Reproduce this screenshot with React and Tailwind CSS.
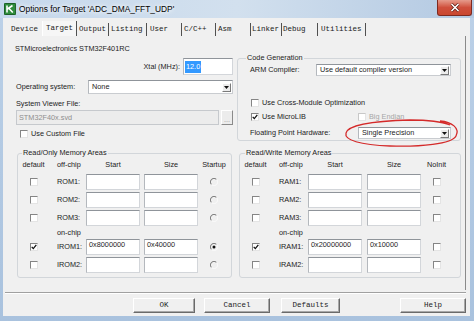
import React from "react";

const tabs = [
  { label: "Device", cls: "w-[34px] pl-[3px]" },
  { label: "Target", cls: "w-[35px] pl-[3px] h-[15px] leading-[15px] bg-[#f6f6f6] border-l border-l-white border-r border-r-[#505050]", active: true },
  { label: "Output", cls: "w-[32px] pl-[2px] border-r border-r-[#505050]" },
  { label: "Listing", cls: "w-[38px] pl-[2px] border-r border-r-[#505050]" },
  { label: "User", cls: "w-[35px] pl-[3px] border-r border-r-[#505050]" },
  { label: "C/C++", cls: "w-[34px] pl-[2px] border-r border-r-[#505050]" },
  { label: "Asm", cls: "w-[35px] pl-[2px] border-r border-r-[#505050]" },
  { label: "Linker", cls: "w-[31px] pl-[1px] border-r border-r-[#505050]" },
  { label: "Debug", cls: "w-[36px] pl-[1px] border-r border-r-[#505050]" },
  { label: "Utilities", cls: "w-[48px] pl-[3px] border-r border-r-[#505050]" },
];

function Check({ checked, disabled }) {
  return (
    <span
      className={`flex h-[8px] w-[8px] shrink-0 items-center justify-center border bg-white border-r-[#e4e4e4] border-b-[#e4e4e4] ${
        disabled ? "border-t-[#c8c8c8] border-l-[#c8c8c8]" : "border-t-[#858585] border-l-[#858585]"
      }`}
    >
      {checked && (
        <svg width="6" height="6" viewBox="0 0 6 6">
          <path d="M0.7 2.9 L2.3 4.6 L5.3 0.9" stroke="#111" strokeWidth="1.3" fill="none" />
        </svg>
      )}
    </span>
  );
}

function Radio({ on }) {
  return (
    <svg width="8" height="8" viewBox="0 0 8 8">
      <path d="M6.6 1.4 A3.6 3.6 0 0 0 1.4 6.6" stroke="#6e6e6e" strokeWidth="1" fill="none" />
      <path d="M1.4 6.6 A3.6 3.6 0 0 0 6.6 1.4" stroke="#fafafa" strokeWidth="1" fill="none" />
      {on && <circle cx="4" cy="4" r="1.5" fill="#111" />}
    </svg>
  );
}

function Field({ className = "", children }) {
  return (
    <div
      className={`shrink-0 border bg-white border-t-[#8f949a] border-l-[#b4b8bd] border-r-[#d3d6da] border-b-[#d3d6da] pl-[2px] text-[7.3px] leading-[10px] ${className}`}
    >
      {children}
    </div>
  );
}

function Select({ className = "", text }) {
  return (
    <div
      className={`flex shrink-0 items-center border bg-white border-t-[#8f949a] border-l-[#b4b8bd] border-r-[#c9ccd0] border-b-[#c9ccd0] pl-[3px] text-[7.3px] leading-[10px] ${className}`}
    >
      <span>{text}</span>
      <span className="ml-auto mr-[1px] flex h-[9px] w-[9px] items-center justify-center border border-t-white border-l-white border-r-[#7a7a7a] border-b-[#7a7a7a] bg-[#ececec]">
        <svg width="5" height="3" viewBox="0 0 5 3">
          <path d="M0 0 H5 L2.5 3 Z" fill="#111" />
        </svg>
      </span>
    </div>
  );
}

function Group({ label, labelCls, className, children }) {
  return (
    <div className={`relative shrink-0 rounded-[3px] border border-[#d2d6da] ${className}`}>
      <span className={`absolute top-[-6px] bg-[#f0f0f0] px-[1px] text-[7.3px] leading-[10px] ${labelCls}`}>
        {label}
      </span>
      {children}
    </div>
  );
}

function MemRow({ label, start = "", size = "", checked, tail, gapCls, endCls, rowCls }) {
  return (
    <div className={`flex h-[16px] items-center ${rowCls}`}>
      <div className="flex w-[31px] shrink-0 justify-center">
        <Check checked={checked} />
      </div>
      <div className="w-[37px] shrink-0 pl-[8px] text-[7.3px] leading-[10px]">{label}</div>
      <Field className="h-[16px] w-[54px]">{start}</Field>
      <Field className={`h-[16px] w-[54px] ${gapCls}`}>{size}</Field>
      <div className={`flex shrink-0 justify-center ${endCls}`}>{tail}</div>
    </div>
  );
}

function MemHeader({ last, gapCls, endCls }) {
  return (
    <div className="mt-[6px] flex h-[10px] items-center text-[7.3px] leading-[10px]">
      <div className="w-[31px] shrink-0 text-center">default</div>
      <div className="w-[37px] shrink-0 pl-[8px]">off-chip</div>
      <div className="w-[54px] shrink-0 text-center">Start</div>
      <div className={`w-[54px] shrink-0 text-center ${gapCls}`}>Size</div>
      <div className={`shrink-0 text-center ${endCls}`}>{last}</div>
    </div>
  );
}

function Button({ className, children }) {
  return (
    <div
      className={`flex h-[15px] shrink-0 items-center justify-center border border-t-white border-l-white border-r-[#6a6a6a] border-b-[#6a6a6a] bg-[#f0f0f0] font-['Liberation_Mono',monospace] text-[7.5px] shadow-[inset_-1px_-1px_0_#a8a8a8] ${className}`}
    >
      {children}
    </div>
  );
}

export default function App() {
  return (
    <div className="relative h-[321px] w-[474px] overflow-hidden bg-linear-to-b from-[#bcd1e8] to-[#a9c2de] font-['Liberation_Sans',Arial,sans-serif] text-[#1c1c1c]">
      {/* Title bar */}
      <div className="flex h-[18px] items-start bg-linear-to-r from-[#c6d8ec] via-[#d2e0ee] to-[#b3c9e2]">
        <svg className="ml-[4px] mt-[3px] shrink-0" width="12" height="12" viewBox="0 0 12 12">
          <rect x="0" y="0" width="12" height="12" rx="1" fill="#2f8d3c" />
          <rect x="0.5" y="0.5" width="11" height="11" rx="1" fill="none" stroke="#1d5e27" />
          <path d="M3 2.5 V9.5 M3.5 6 L8.5 2.5 M4.8 5.2 L8.8 9.5" stroke="#fff" strokeWidth="1.6" fill="none" />
        </svg>
        <span className="ml-[3px] mt-[4px] text-[8.4px] leading-[10px] text-black [text-shadow:0_0_4px_#ffffff,0_0_6px_#ffffff]">
          Options for Target 'ADC_DMA_FFT_UDP'
        </span>
        <div className="ml-auto mr-[2px] flex h-[16px] w-[35px] items-center justify-center rounded-b-[3px] border border-t-0 border-[#7e2a20] bg-linear-to-b from-[#e59a8c] via-[#cf4f3c] to-[#c9472f]">
          <svg width="10" height="9" viewBox="0 0 10 9">
            <path d="M1.5 1 L8.5 8 M8.5 1 L1.5 8" stroke="#5a1b14" strokeWidth="3" />
            <path d="M1.5 1 L8.5 8 M8.5 1 L1.5 8" stroke="#ffffff" strokeWidth="1.6" />
          </svg>
        </div>
      </div>

      {/* Client area */}
      <div className="ml-[3px] h-[298px] w-[467px] bg-[#f0f0f0]">
        {/* Tabs */}
        <div className="flex h-[18px] items-end pl-[5px] font-['Liberation_Mono',monospace] text-[7.5px] text-[#202020]">
          {tabs.map((t) => (
            <div key={t.label} className={`h-[13px] shrink-0 leading-[13px] ${t.cls}`}>
              {t.label}
            </div>
          ))}
        </div>

        {/* Tab panel */}
        <div className="ml-[2px] flex h-[254px] w-[461px] flex-col border-r border-r-[#8a8a8a]">
          {/* Top section */}
          <div className="flex h-[114px] shrink-0">
            <div className="ml-[10px] flex w-[219px] shrink-0 flex-col text-[7.3px] leading-[10px]">
              <div className="mt-[8px] h-[10px]">STMicroelectronics STM32F401RC</div>
              <div className="mt-[4px] flex h-[17px] items-center justify-end pr-[1px]">
                <span>Xtal (MHz):</span>
                <div className="ml-[3px] flex h-[17px] w-[50px] items-center border bg-white border-t-[#8f949a] border-l-[#b4b8bd] border-r-[#d3d6da] border-b-[#d3d6da] pl-[1px]">
                  <span className="bg-[#3399ff] px-[1px] leading-[12px] text-white">12.0</span>
                </div>
              </div>
              <div className="mt-[5px] flex h-[14px] items-center">
                <span className="w-[73px] shrink-0 pl-[1px]">Operating system:</span>
                <Select className="h-[14px] w-[145px]" text="None" />
              </div>
              <div className="mt-[5px] h-[10px] pl-[1px]">System Viewer File:</div>
              <div className="mt-[1px] flex h-[15px] items-center">
                <div className="ml-[1px] h-[15px] w-[203px] border border-[#c6c9cd] bg-[#ececec] pl-[2px] leading-[13px] text-[#8e8e8e]">
                  STM32F40x.svd
                </div>
                <div className="ml-[2px] flex h-[15px] w-[12px] items-end justify-center border border-t-white border-l-white border-r-[#8a8a8a] border-b-[#8a8a8a] bg-[#ececec] leading-[8px] text-[#9a9a9a]">
                  ...
                </div>
              </div>
              <div className="mt-[4px] flex h-[10px] items-center">
                <span className="ml-[5px]">
                  <Check />
                </span>
                <span className="ml-[3px]">Use Custom File</span>
              </div>
            </div>

            <Group
              label="Code Generation"
              labelCls="left-[8px]"
              className="ml-[3px] mt-[22px] h-[83px] w-[224px] text-[7.3px] leading-[10px]"
            >
              <div className="mt-[5px] flex h-[12px] items-center">
                <span className="w-[78px] shrink-0 pl-[12px]">ARM Compiler:</span>
                <Select className="h-[12px] w-[135px]" text="Use default compiler version" />
              </div>
              <div className="mt-[22px] flex h-[10px] items-center pl-[13px]">
                <Check />
                <span className="ml-[3px]">Use Cross-Module Optimization</span>
              </div>
              <div className="mt-[4px] flex h-[10px] items-center pl-[13px]">
                <span className="flex w-[107px] shrink-0 items-center">
                  <Check checked />
                  <span className="ml-[3px]">Use MicroLIB</span>
                </span>
                <Check disabled />
                <span className="ml-[3px] text-[#a6a6a6]">Big Endian</span>
              </div>
              <div className="mt-[5px] flex h-[12px] items-center">
                <span className="w-[120px] shrink-0 pl-[12px]">Floating Point Hardware:</span>
                <Select className="h-[12px] w-[93px]" text="Single Precision" />
              </div>
            </Group>
          </div>

          {/* Memory areas */}
          <div className="mt-[3px] flex">
            <Group label="Read/Only Memory Areas" labelCls="left-[4px]" className="ml-[12px] h-[125px] w-[215px]">
              <MemHeader last="Startup" gapCls="ml-[4px]" endCls="w-[32px]" />
              <MemRow rowCls="mt-[4px]" label="ROM1:" tail={<Radio />} gapCls="ml-[4px]" endCls="w-[32px]" />
              <MemRow rowCls="mt-[2px]" label="ROM2:" tail={<Radio />} gapCls="ml-[4px]" endCls="w-[32px]" />
              <MemRow rowCls="mt-[2px]" label="ROM3:" tail={<Radio />} gapCls="ml-[4px]" endCls="w-[32px]" />
              <div className="mt-[2px] h-[10px] pl-[39px] text-[7.3px] leading-[10px]">on-chip</div>
              <MemRow
                rowCls="mt-[1px]"
                label="IROM1:"
                start="0x8000000"
                size="0x40000"
                checked
                tail={<Radio on />}
                gapCls="ml-[4px]"
                endCls="w-[32px]"
              />
              <MemRow rowCls="mt-[2px]" label="IROM2:" tail={<Radio />} gapCls="ml-[4px]" endCls="w-[32px]" />
            </Group>

            <Group label="Read/Write Memory Areas" labelCls="left-[5px]" className="ml-[7px] h-[125px] w-[222px]">
              <MemHeader last="NoInit" gapCls="ml-[5px]" endCls="w-[31px]" />
              <MemRow rowCls="mt-[4px]" label="RAM1:" tail={<Check />} gapCls="ml-[5px]" endCls="w-[31px]" />
              <MemRow rowCls="mt-[2px]" label="RAM2:" tail={<Check />} gapCls="ml-[5px]" endCls="w-[31px]" />
              <MemRow rowCls="mt-[2px]" label="RAM3:" tail={<Check />} gapCls="ml-[5px]" endCls="w-[31px]" />
              <div className="mt-[2px] h-[10px] pl-[39px] text-[7.3px] leading-[10px]">on-chip</div>
              <MemRow
                rowCls="mt-[1px]"
                label="IRAM1:"
                start="0x20000000"
                size="0x10000"
                checked
                tail={<Check />}
                gapCls="ml-[5px]"
                endCls="w-[31px]"
              />
              <MemRow rowCls="mt-[2px]" label="IRAM2:" tail={<Check />} gapCls="ml-[5px]" endCls="w-[31px]" />
            </Group>
          </div>
        </div>

        {/* Separator */}
        <div className="ml-[2px] mt-[2px] w-[461px] border-t border-b border-t-[#a0a0a0] border-b-white" />

        {/* Buttons */}
        <div className="mt-[4px] flex">
          <Button className="ml-[130px] w-[62px]">OK</Button>
          <Button className="ml-[9px] w-[66px]">Cancel</Button>
          <Button className="ml-[11px] w-[59px]">Defaults</Button>
          <Button className="ml-[60px] w-[66px]">Help</Button>
        </div>
      </div>

      {/* Red hand-drawn annotation */}
      <svg className="pointer-events-none absolute left-0 top-0" width="474" height="321" viewBox="0 0 474 321">
        <path
          d="M440 121 C452 122 460 128 456 136 C452 144 420 147 390 146 C360 145 344 140 346 133 C348 125 375 121 410 120 C425 120 440 121 450 125"
          stroke="#d42a2a"
          strokeWidth="1.3"
          fill="none"
        />
      </svg>
    </div>
  );
}
